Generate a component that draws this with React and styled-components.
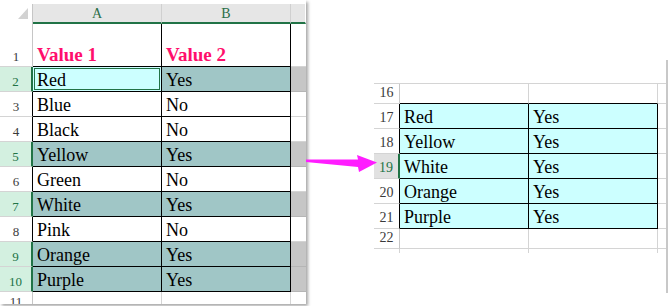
import React from "react";
import styled, { createGlobalStyle } from "styled-components";

const Global = createGlobalStyle`
  html, body { margin: 0; padding: 0; background: #fff; }
  body { font-family: "Liberation Serif", "Times New Roman", serif; }
`;

const SERIF = `"Liberation Serif", "Times New Roman", serif`;

const C = {
  grid: "#d4d4d4",
  hdrBg: "#e6e6e6",
  green: "#217346",
  selHdr: "#d3f0e0",
  teal: "#a0c6c6",
  cyan: "#ccffff",
  strip: "#c6c6c6",
  pink: "#ff0f6c",
};

const Page = styled.div`
  position: relative;
  width: 669px;
  height: 306px;
  display: flex;
  align-items: flex-start;
  overflow: hidden;
  font-family: ${SERIF};
`;

const LeftPanel = styled.div`
  width: 306px;
  padding-top: 4px;
  background: #fff;
  box-shadow: 2px 2px 3px rgba(0, 0, 0, 0.35);
`;

const RightPanel = styled.div`
  margin-left: 64px;
  margin-top: 60px;
  width: 292px;
  padding: 23px 0 40px 4px;
  border-right: 2px solid #c8c8c8;
  background: #fff;
`;

const Grid = styled.div`
  border-top: ${(p) => (p.$topLine ? `1px solid ${C.grid}` : "none")};
`;

const Row = styled.div`
  display: grid;
  grid-template-columns: ${(p) => p.$cols};
  height: ${(p) => p.$h}px;
`;

const Corner = styled.div`
  box-sizing: border-box;
  border-right: 1px solid #c6c6c6;
  display: flex;
  align-items: flex-start;
  justify-content: flex-end;
  padding: 4px 3px 0 0;
`;

const ColHead = styled.div`
  box-sizing: border-box;
  background: ${C.hdrBg};
  border-right: 1px solid ${(p) => p.$line || "#d0d0d0"};
  border-bottom: 2px solid ${C.green};
  display: flex;
  align-items: flex-end;
  justify-content: center;
  padding-bottom: 1px;
  font-family: ${SERIF};
  font-size: 14px;
  line-height: 14px;
  color: #2b6e49;
`;

const RowHead = styled.div`
  box-sizing: border-box;
  display: flex;
  align-items: ${(p) => (p.$top ? "flex-start" : "flex-end")};
  justify-content: center;
  padding: ${(p) => (p.$top ? "3px 0 0 0" : "0 0 3px 0")};
  overflow: hidden;
  font-family: ${SERIF};
  font-size: ${(p) => p.$fs}px;
  line-height: ${(p) => p.$fs}px;
  color: ${(p) => (p.$sel ? C.green : "#3a3a3a")};
  background: ${(p) => (p.$sel ? p.$selBg : "#fff")};
  border-bottom: ${(p) => (p.$noBottom ? "none" : `1px solid ${C.grid}`)};
  border-right: ${(p) =>
    p.$sel ? `2px solid ${C.green}` : `1px solid ${p.$edge || "#c6c6c6"}`};
`;

const Cell = styled.div`
  box-sizing: border-box;
  display: flex;
  align-items: flex-end;
  padding: 0 0 2px 4px;
  overflow: hidden;
  white-space: nowrap;
  font-family: ${SERIF};
  font-size: ${(p) => (p.$head ? 19 : 18)}px;
  line-height: 18px;
  font-weight: ${(p) => (p.$head ? 700 : 400)};
  color: ${(p) => (p.$head ? C.pink : "#000")};
  background: ${(p) => p.$bg || "#fff"};
  border-right: 1px solid ${(p) => p.$right || C.grid};
  border-bottom: ${(p) => (p.$noBottom ? "none" : `1px solid ${p.$bottom || C.grid}`)};
  box-shadow: ${(p) =>
    p.$active ? `inset 0 0 0 1px ${C.cyan}, inset 0 0 0 2px ${C.green}` : "none"};
`;

const Strip = styled.div`
  box-sizing: border-box;
  background: ${(p) => (p.$sel ? C.strip : "#fff")};
  border-bottom: ${(p) => (p.$noBottom ? "none" : `1px solid ${p.$sel ? "#b5b5b5" : C.grid}`)};
`;

const Arrow = styled.svg`
  position: absolute;
  left: 300px;
  top: 150px;
`;

const leftCols = "33px 129px 129px 15px";
const rightCols = "26px 129px 129px 8px";

const leftData = [
  ["Red", "Yes", true],
  ["Blue", "No", false],
  ["Black", "No", false],
  ["Yellow", "Yes", true],
  ["Green", "No", false],
  ["White", "Yes", true],
  ["Pink", "No", false],
  ["Orange", "Yes", true],
  ["Purple", "Yes", true],
];

const rightData = ["Red", "Yellow", "White", "Orange", "Purple"];

export default function App() {
  return (
    <Page>
      <Global />
      <LeftPanel>
        <Grid>
          <Row $cols={leftCols} $h={20}>
            <Corner>
              <svg width="11" height="12" viewBox="0 0 11 12">
                <polygon points="10,0 10,11 0,11" fill="#d2d2d2" />
              </svg>
            </Corner>
            <ColHead>A</ColHead>
            <ColHead>B</ColHead>
            <ColHead $line="#fff" />
          </Row>
          <Row $cols={leftCols} $h={43}>
            <RowHead $fs={13}>1</RowHead>
            <Cell $head $right="#000" $bottom="#000">Value 1</Cell>
            <Cell $head $right="#000" $bottom="#000">Value 2</Cell>
            <Strip />
          </Row>
          {leftData.map(([a, b, sel], i) => (
            <Row key={i} $cols={leftCols} $h={25}>
              <RowHead $fs={13} $sel={sel} $selBg={C.selHdr} $edge="#000">
                {i + 2}
              </RowHead>
              <Cell
                $bg={i === 0 ? C.cyan : sel ? C.teal : "#fff"}
                $active={i === 0}
                $right="#000"
                $bottom="#000"
              >
                {a}
              </Cell>
              <Cell $bg={sel ? C.teal : "#fff"} $right="#000" $bottom="#000">
                {b}
              </Cell>
              <Strip $sel={sel} />
            </Row>
          ))}
          <Row $cols={leftCols} $h={12}>
            <RowHead $fs={13} $top $noBottom>11</RowHead>
            <Cell $noBottom />
            <Cell $noBottom />
            <Strip $noBottom />
          </Row>
        </Grid>
      </LeftPanel>

      <RightPanel>
        <Grid $topLine>
          <Row $cols={rightCols} $h={20}>
            <RowHead $fs={14}>16</RowHead>
            <Cell $bottom="#000" />
            <Cell $bottom="#000" />
            <Strip />
          </Row>
          {rightData.map((name, i) => (
            <Row key={name} $cols={rightCols} $h={25}>
              <RowHead $fs={14} $sel={i === 2} $selBg="#e1e1e1" $edge="#000">
                {17 + i}
              </RowHead>
              <Cell $bg={C.cyan} $right="#000" $bottom="#000">
                {name}
              </Cell>
              <Cell $bg={C.cyan} $right="#000" $bottom="#000">
                Yes
              </Cell>
              <Strip />
            </Row>
          ))}
          <Row $cols={rightCols} $h={20}>
            <RowHead $fs={14}>22</RowHead>
            <Cell />
            <Cell />
            <Strip />
          </Row>
          <Row $cols={rightCols} $h={4}>
            <RowHead $fs={14} $noBottom $edge={C.grid} />
            <Cell $noBottom />
            <Cell $noBottom />
            <Strip $noBottom />
          </Row>
        </Grid>
      </RightPanel>

      <Arrow width="80" height="25" viewBox="300 150 80 25">
        <polygon
          points="306,159.5 358,159.5 357,155 377,162.5 359,172 358,167 306,162"
          fill="#ff1dff"
        />
      </Arrow>
    </Page>
  );
}
